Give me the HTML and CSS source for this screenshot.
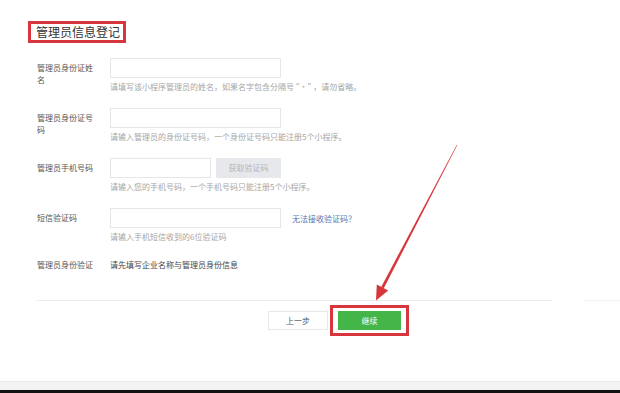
FILE: index.html
```html
<!DOCTYPE html>
<html lang="zh-CN">
<head>
<meta charset="utf-8">
<title>管理员信息登记</title>
<link rel="stylesheet" href="styles.css">
</head>
<body>
<div class="page">
  <div class="content">
    <div class="title-wrap"><h1 class="title">管理员信息登记</h1></div>

    <div class="row">
      <div class="label">管理员身份证姓名</div>
      <div class="field">
        <div class="input wide"></div>
        <div class="hint">请填写该小程序管理员的姓名，如果名字包含分隔号 "·" ，请勿省略。</div>
      </div>
    </div>

    <div class="row">
      <div class="label">管理员身份证号码</div>
      <div class="field">
        <div class="input wide"></div>
        <div class="hint">请输入管理员的身份证号码，一个身份证号码只能注册5个小程序。</div>
      </div>
    </div>

    <div class="row">
      <div class="label">管理员手机号码</div>
      <div class="field">
        <div class="inline">
          <div class="input narrow"></div>
          <div class="btn-code">获取验证码</div>
        </div>
        <div class="hint">请输入您的手机号码，一个手机号码只能注册5个小程序。</div>
      </div>
    </div>

    <div class="row">
      <div class="label">短信验证码</div>
      <div class="field">
        <div class="inline">
          <div class="input wide"></div>
          <a class="link">无法接收验证码？</a>
        </div>
        <div class="hint">请输入手机短信收到的6位验证码</div>
      </div>
    </div>

    <div class="row last">
      <div class="label single">管理员身份验证</div>
      <div class="field">
        <div class="value">请先填写企业名称与管理员身份信息</div>
      </div>
    </div>

    <div class="sep">
      <div class="sep-main"></div>
      <div class="sep-tail"></div>
    </div>

    <div class="actions">
      <div class="btn-prev">上一步</div>
      <div class="highlight"><div class="btn-next">继续</div></div>
    </div>
  </div>

  <div class="footer"></div>

  <svg class="arrow" width="620" height="393" viewBox="0 0 620 393">
    <polygon points="456.7,145.1 457.3,144.9 383.8,288.3 381.2,286.9" fill="#d8353b"/>
    <polygon points="376,300.5 388.2,290.6 376.8,284.6" fill="#d8353b"/>
  </svg>
</div>
</body>
</html>
```

FILE: styles.css
```css
* { box-sizing: border-box; }

html, body {
  margin: 0;
  padding: 0;
  background: #ffffff;
}

body {
  font-family: "Noto Sans CJK SC", "Noto Sans", sans-serif;
  color: #333333;
}

.page {
  position: relative;
  width: 620px;
  height: 393px;
  display: flex;
  flex-direction: column;
  overflow: hidden;
}

.content {
  flex: 1;
  padding-top: 21px;
}

.title-wrap {
  padding-left: 28px;
  display: flex;
}

.title {
  margin: 0;
  font-size: 12px;
  font-weight: normal;
  line-height: 16px;
  color: #333333;
  border: 3px solid #d7363c;
  padding: 0 3px 0 5px;
}

.row {
  display: flex;
  padding-left: 37px;
  margin-top: 15px;
}

.row.last { margin-top: 16px; }

.label {
  width: 60px;
  margin-right: 13px;
  font-size: 8px;
  line-height: 12px;
  padding-top: 4px;
  color: #555555;
}

.label.single { padding-top: 0; }

.field {
  display: flex;
  flex-direction: column;
}

.inline {
  display: flex;
  align-items: center;
}

.input {
  height: 20px;
  border: 1px solid #e6e6e6;
  background: #ffffff;
}

.input.wide { width: 171px; }
.input.narrow { width: 101px; }

.btn-code {
  margin-left: 5px;
  width: 65px;
  height: 20px;
  background: #e7e8ec;
  color: #b5b5ba;
  font-size: 8px;
  line-height: 20px;
  text-align: center;
}

.link {
  margin-left: 11px;
  font-size: 8px;
  color: #4f7ab5;
  text-decoration: none;
}

.hint {
  margin-top: 3px;
  font-size: 8px;
  line-height: 12px;
  color: #a6a6a6;
  white-space: nowrap;
}

.value {
  font-size: 8px;
  line-height: 12px;
  color: #444444;
}

.sep {
  display: flex;
  margin-top: 29px;
}

.sep-main {
  margin-left: 37px;
  width: 515px;
  border-top: 1px solid #ededed;
}

.sep-tail {
  margin-left: 32px;
  flex: 1;
  border-top: 1px solid #f2f2f2;
}

.actions {
  display: flex;
  align-items: center;
  padding-left: 268px;
  margin-top: 4px;
}

.btn-prev {
  width: 60px;
  height: 19px;
  border: 1px solid #e8e8e8;
  font-size: 8px;
  line-height: 17px;
  text-align: center;
  color: #555555;
}

.highlight {
  margin-left: 2px;
  border: 3px solid #d7363c;
  padding: 3px 5px;
}

.btn-next {
  width: 63px;
  height: 19px;
  background: #44b549;
  color: #ffffff;
  font-size: 8px;
  line-height: 19px;
  text-align: center;
}

.footer {
  height: 12px;
  background: #f3f3f3;
  border-top: 1px solid #e9e9e9;
  border-bottom: 3px solid #111111;
}

.arrow {
  position: absolute;
  left: 0;
  top: 0;
  pointer-events: none;
}
```
